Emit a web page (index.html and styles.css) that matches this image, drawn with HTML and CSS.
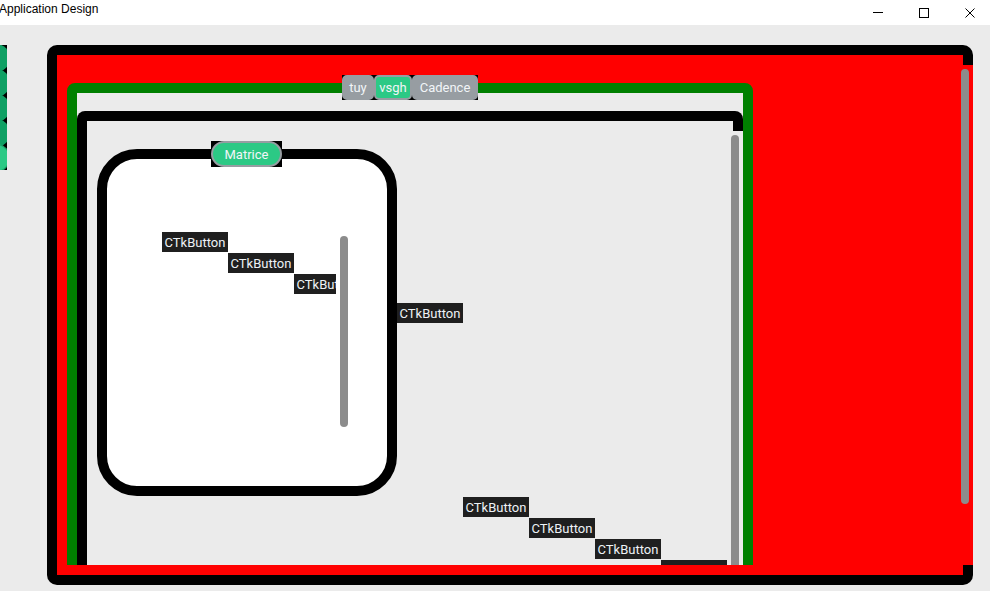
FILE: index.html
```html
<!DOCTYPE html>
<html lang="en">
<head>
    <meta charset="UTF-8">
    <meta name="viewport" content="width=device-width, initial-scale=1.0">
    <title>Application Design</title>
    <link rel="stylesheet" href="styles.css">
</head>
<body>
    <!-- window title bar -->
    <div class="titlebar">
        <span class="title">Application Design</span>
        <div class="controls">
            <span class="ctl"><svg width="10" height="10"><path d="M0 4.5H10" stroke="#000" fill="none"/></svg></span>
            <span class="ctl"><svg width="10" height="10"><rect x="0.5" y="0.5" width="9" height="9" stroke="#000" fill="none"/></svg></span>
            <span class="ctl"><svg width="10" height="10"><path d="M0.5 0.5L9.5 9.5M9.5 0.5L0.5 9.5" stroke="#000" fill="none"/></svg></span>
        </div>
    </div>

    <div class="main">
        <!-- side buttons, mostly off screen -->
        <div class="side">
            <span class="dot"></span>
            <span class="dot"></span>
            <span class="dot"></span>
            <span class="dot"></span>
            <span class="dot hot"></span>
        </div>

        <!-- outer scrollable frame -->
        <div class="frame">
            <div class="canvas">
                <div class="view">
                    <div class="tabview">
                        <div class="segment">
                            <span class="seg seg-tuy">tuy</span>
                            <span class="seg seg-vsgh active">vsgh</span>
                            <span class="seg seg-cad">Cadence</span>
                        </div>

                        <!-- inner scrollable frame -->
                        <div class="scroll">
                            <div class="scroll-in">
                                <div class="scroll-view">
                                    <div class="grid">
                                        <div class="matrice">
                                            <div class="mlabel"><span class="pill">Matrice</span></div>
                                            <div class="mbody">
                                                <div class="mview">
                                                    <span class="btn">CTkButton</span>
                                                    <span class="btn step1">CTkButton</span>
                                                    <span class="btn step2">CTkButton</span>
                                                </div>
                                                <div class="mbar"><span class="thumb"></span></div>
                                            </div>
                                        </div>
                                        <span class="btn b4">CTkButton</span>
                                        <span class="btn b5">CTkButton</span>
                                        <span class="btn b6">CTkButton</span>
                                        <span class="btn b7">CTkButton</span>
                                        <span class="btn b8">CTkButton</span>
                                    </div>
                                </div>
                                <div class="bar"><span class="thumb"></span></div>
                                <span class="cap cap-top"></span>
                            </div>
                        </div>
                    </div>
                </div>
                <div class="bar outer-bar"><span class="thumb"></span></div>
                <span class="cap cap-top"></span>
                <span class="cap cap-bottom"></span>
            </div>
        </div>
    </div>
</body>
</html>
```

FILE: styles.css
```css
* {
    box-sizing: border-box;
}
body {
    margin: 0;
    height: 591px;
    overflow: hidden;
    background: #ebebeb;
    font-family: Roboto, "Liberation Sans", sans-serif;
}

/* title bar */
.titlebar {
    height: 25px;
    background: #fff;
    display: flex;
    justify-content: space-between;
    overflow: hidden;
}
.title {
    font: 12px/14px "Liberation Sans", Arial, sans-serif;
    padding-top: 2px;
    margin-left: -1px;
    color: #000;
}
.controls {
    display: flex;
    margin-right: -3px;
}
.ctl {
    width: 46px;
    height: 25px;
    display: flex;
    align-items: center;
    justify-content: center;
}

.main {
    display: flex;
    align-items: flex-start;
    padding-top: 20px;
}

/* side strip */
.side {
    width: 7px;
    height: 125px;
    background: #000;
    overflow: hidden;
    display: flex;
    flex-direction: column;
}
.dot {
    flex: none;
    width: 28px;
    height: 28px;
    margin: -1.5px 0 -1.5px -18px;
    border-radius: 50%;
    background: #10a064;
}
.dot.hot {
    background: #2cc985;
    box-shadow: inset 0 0 0 1px #1a9e66;
}

/* outer frame */
.frame {
    margin-left: 40px;
    width: 926px;
    height: 540px;
    background: #000;
    border-radius: 10px;
    padding: 10px 0 10px 10px;
}
.canvas {
    position: relative;
    height: 520px;
    background: #f00;
    display: flex;
    padding-bottom: 10px;
}
.view {
    flex: 1;
    overflow: hidden;
    padding: 28px 0 0 10px;
}
.bar {
    flex: none;
    width: 12px;
    padding-top: 14px;
}
.thumb {
    display: block;
    width: 8px;
    height: 440px;
    border-radius: 4px;
    background: #8c8c8c;
}
.outer-bar .thumb {
    height: 435px;
}
.cap {
    position: absolute;
    right: 0;
    width: 10px;
    height: 10px;
    background: #000;
}
.cap-top { top: 0; }
.cap-bottom { bottom: 0; }

/* tab view */
.tabview {
    position: relative;
    width: 686px;
    height: 500px;
    border: 10px solid #008000;
    border-radius: 8px;
    background: #ebebeb;
    padding-top: 18px;
}
.segment {
    position: absolute;
    top: -18px;
    left: 50%;
    transform: translateX(-50%);
    display: flex;
    height: 25px;
    background: #000;
}
.seg {
    height: 25px;
    display: flex;
    align-items: center;
    justify-content: center;
    border: 2px solid #979da2;
    border-radius: 5px;
    background: #979da2;
    color: #f2f5f8;
    font-size: 13px;
}
.seg-tuy { width: 32px; }
.seg-vsgh { width: 38px; }
.seg-cad { width: 66px; }
.seg.active {
    background: #2cc985;
}

/* inner scroll frame */
.scroll {
    height: 462px;
    background: #000;
    border-radius: 8px 8px 0 0;
    padding: 10px 0 0 10px;
}
.scroll-in {
    position: relative;
    height: 100%;
    display: flex;
    background: #ebebeb;
}
.scroll-view {
    flex: 1;
    overflow: hidden;
}

.grid {
    display: grid;
    grid-template-columns: 300px repeat(5, 66px);
    grid-template-rows: 348px repeat(4, 21px);
    padding: 28px 0 0 10px;
}

/* Matrice frame */
.matrice {
    grid-area: 1 / 1;
    position: relative;
    height: 347px;
    border: 10px solid #000;
    border-radius: 40px;
    background: #fff;
}
.mlabel {
    position: absolute;
    top: -18px;
    left: 104px;
    width: 71px;
    height: 26px;
    background: #000;
}
.pill {
    display: flex;
    height: 100%;
    align-items: center;
    justify-content: center;
    border: 2px solid #979da2;
    border-radius: 13px;
    background: #2cc985;
    color: #f2f5f8;
    font-size: 13px;
}
.mbody {
    display: flex;
    height: 100%;
}
.mview {
    width: 229px;
    height: 100%;
    overflow: hidden;
    padding: 73px 0 0 55px;
    display: flex;
    flex-direction: column;
    align-items: flex-start;
}
.mbar {
    padding: 77px 0 0 4px;
}
.mbar .thumb {
    height: 191px;
}

.btn {
    flex: none;
    width: 66px;
    height: 20px;
    margin-bottom: 1px;
    background: #1f1f1f;
    color: #eef2f6;
    font-size: 13px;
    display: flex;
    align-items: center;
    justify-content: center;
    white-space: nowrap;
    overflow: hidden;
}
.step1 { margin-left: 66px; }
.step2 { margin-left: 132px; }

.b4 { grid-area: 1 / 2; align-self: start; margin-top: 154px; }
.b5 { grid-area: 2 / 3; }
.b6 { grid-area: 3 / 4; }
.b7 { grid-area: 4 / 5; }
.b8 { grid-area: 5 / 6; }
```
